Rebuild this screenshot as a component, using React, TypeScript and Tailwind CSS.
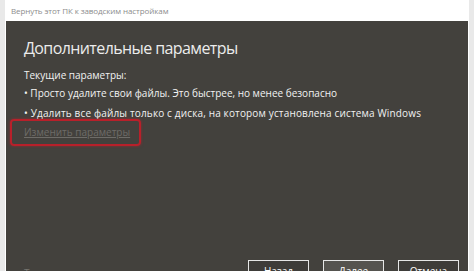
import React from "react";

export default function App() {
  const font = { fontFamily: '"Open Sans", "Noto Sans", sans-serif' };
  return (
    <div className="w-[474px] h-[271px] overflow-hidden bg-[#e9e9e9] flex" style={font}>
      <div className="ml-[5px] w-[464px] h-full flex flex-col bg-white">
        <div className="h-[21px] shrink-0 flex items-center pl-[6px] text-[8px] text-[#8d8d8d] tracking-[-0.1px]">
          Вернуть этот ПК к заводским настройкам
        </div>
        <div className="flex-1 ml-[1px] mr-[1px] bg-[#43413d] flex flex-col pl-[18px] pr-[8px] pt-[15px] relative">
          <div className="text-[16px] leading-[24px] text-[#ececec] tracking-[-0.6px]">Дополнительные параметры</div>
          <div className="mt-[8px] text-[10px] leading-[14px] text-[#f2f2f2]">Текущие параметры:</div>
          <div className="mt-[4px] text-[10px] leading-[14px] text-[#f2f2f2]">• Просто удалите свои файлы. Это быстрее, но менее безопасно</div>
          <div className="mt-[6px] text-[10px] leading-[14px] text-[#f2f2f2] tracking-[0.15px]">• Удалить все файлы только с диска, на котором установлена система Windows</div>
          <div className="mt-[5px] text-[10px] leading-[14px] text-[#6e6c68] underline decoration-[#6e6c68]">Изменить параметры</div>
          <div className="absolute left-[4px] top-[98px] w-[131px] h-[27px] rounded-[4px] border-[2.5px] border-[#b8202a] shadow-[0_0_3px_rgba(200,30,40,0.6)]" />
          <div className="flex-1" />
          <div className="flex items-start justify-between mb-[-13px]">
            <div className="mt-[6px] text-[10px] leading-[14px] text-[#77756f]">Технические параметры</div>
            <div className="flex gap-[14px] mr-[1px]">
              <div className="w-[61px] h-[24px] border-[1.5px] border-[#e6e6e6] bg-[#3e3c39] text-[10px] text-white flex justify-center pt-[3px]">Назад</div>
              <div className="w-[61px] h-[24px] border-[1.5px] border-[#e6e6e6] bg-[#55534f] text-[10px] text-white flex justify-center pt-[3px]">Далее</div>
              <div className="w-[61px] h-[24px] border-[1.5px] border-[#e6e6e6] bg-[#3e3c39] text-[10px] text-white flex justify-center pt-[3px]">Отмена</div>
            </div>
          </div>
        </div>
      </div>
    </div>
  );
}
